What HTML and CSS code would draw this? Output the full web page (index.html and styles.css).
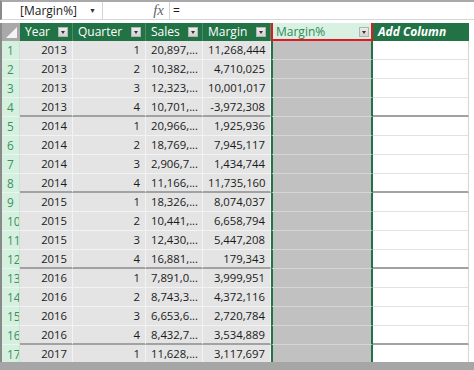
FILE: index.html
```html
<!DOCTYPE html>
<html lang="en">
<head>
  <meta charset="UTF-8">
  <title>Margin%</title>
  <link rel="stylesheet" href="styles.css">
</head>
<body>
  <div class="formula-bar">
    <div class="namebox">[Margin%] <span class="caret">&#9660;</span></div>
    <div class="fx">fx</div>
    <div class="formula">=</div>
  </div>

  <div class="grid">
    <div class="row head">
      <div class="corner">
        <svg width="18" height="18" viewBox="0 0 18 18"><path d="M4 15 L15 4 L15 15 Z" fill="#f4f4f4"/></svg>
      </div>
      <div class="h">Year<span class="filter"></span></div>
      <div class="h">Quarter<span class="filter"></span></div>
      <div class="h">Sales<span class="filter"></span></div>
      <div class="h">Margin<span class="filter"></span></div>
      <div class="h selected">Margin%<span class="filter"></span></div>
      <div class="h add">Add Column</div>
    </div>

    <div class="row"><div class="num">1</div><div class="c r">2013</div><div class="c r">1</div><div class="c">20,897,...</div><div class="c r">11,268,444</div><div class="pct"></div><div class="blank"></div></div>
    <div class="row"><div class="num">2</div><div class="c r">2013</div><div class="c r">2</div><div class="c">10,382,...</div><div class="c r">4,710,025</div><div class="pct"></div><div class="blank"></div></div>
    <div class="row"><div class="num">3</div><div class="c r">2013</div><div class="c r">3</div><div class="c">12,323,...</div><div class="c r">10,001,017</div><div class="pct"></div><div class="blank"></div></div>
    <div class="row group-end"><div class="num">4</div><div class="c r">2013</div><div class="c r">4</div><div class="c">10,701,...</div><div class="c r">-3,972,308</div><div class="pct"></div><div class="blank"></div></div>
    <div class="row"><div class="num">5</div><div class="c r">2014</div><div class="c r">1</div><div class="c">20,966,...</div><div class="c r">1,925,936</div><div class="pct"></div><div class="blank"></div></div>
    <div class="row"><div class="num">6</div><div class="c r">2014</div><div class="c r">2</div><div class="c">18,769,...</div><div class="c r">7,945,117</div><div class="pct"></div><div class="blank"></div></div>
    <div class="row"><div class="num">7</div><div class="c r">2014</div><div class="c r">3</div><div class="c">2,906,7...</div><div class="c r">1,434,744</div><div class="pct"></div><div class="blank"></div></div>
    <div class="row group-end"><div class="num">8</div><div class="c r">2014</div><div class="c r">4</div><div class="c">11,166,...</div><div class="c r">11,735,160</div><div class="pct"></div><div class="blank"></div></div>
    <div class="row"><div class="num">9</div><div class="c r">2015</div><div class="c r">1</div><div class="c">18,326,...</div><div class="c r">8,074,037</div><div class="pct"></div><div class="blank"></div></div>
    <div class="row"><div class="num">10</div><div class="c r">2015</div><div class="c r">2</div><div class="c">10,441,...</div><div class="c r">6,658,794</div><div class="pct"></div><div class="blank"></div></div>
    <div class="row"><div class="num">11</div><div class="c r">2015</div><div class="c r">3</div><div class="c">12,430,...</div><div class="c r">5,447,208</div><div class="pct"></div><div class="blank"></div></div>
    <div class="row group-end"><div class="num">12</div><div class="c r">2015</div><div class="c r">4</div><div class="c">16,881,...</div><div class="c r">179,343</div><div class="pct"></div><div class="blank"></div></div>
    <div class="row"><div class="num">13</div><div class="c r">2016</div><div class="c r">1</div><div class="c">7,891,0...</div><div class="c r">3,999,951</div><div class="pct"></div><div class="blank"></div></div>
    <div class="row"><div class="num">14</div><div class="c r">2016</div><div class="c r">2</div><div class="c">8,743,3...</div><div class="c r">4,372,116</div><div class="pct"></div><div class="blank"></div></div>
    <div class="row"><div class="num">15</div><div class="c r">2016</div><div class="c r">3</div><div class="c">6,653,6...</div><div class="c r">2,720,784</div><div class="pct"></div><div class="blank"></div></div>
    <div class="row group-end"><div class="num">16</div><div class="c r">2016</div><div class="c r">4</div><div class="c">8,432,7...</div><div class="c r">3,534,889</div><div class="pct"></div><div class="blank"></div></div>
    <div class="row"><div class="num">17</div><div class="c r">2017</div><div class="c r">1</div><div class="c">11,628,...</div><div class="c r">3,117,697</div><div class="pct"></div><div class="blank"></div></div>
  </div>

  <div class="hscroll"></div>
</body>
</html>
```

FILE: styles.css
```css
* {
  box-sizing: border-box;
}

body {
  margin: 0;
  width: 474px;
  height: 370px;
  overflow: hidden;
  display: flex;
  flex-direction: column;
  background-color: #fff;
  font-family: "Open Sans", "Noto Sans", sans-serif;
  color: #1a1a1a;
}

/* formula bar */
.formula-bar {
  display: flex;
  flex: none;
  height: 20px;
  border-top: 2px solid #a9a9a9;
  border-bottom: 1px solid #d6d6d6;
  border-left: 2px solid #8a8a8a;
  font-size: 12px;
}

.namebox {
  width: 101px;
  display: flex;
  align-items: center;
  padding-left: 18px;
  border-right: 1px solid #d4d4d4;
}

.caret {
  margin-left: auto;
  margin-right: 6px;
  font-size: 7px;
  color: #333;
}

.fx {
  width: 67px;
  display: flex;
  align-items: center;
  justify-content: flex-end;
  padding-right: 5px;
  border-right: 1px solid #d4d4d4;
  font-family: "Liberation Serif", serif;
  font-style: italic;
  font-size: 15px;
  color: #666;
}

.formula {
  display: flex;
  align-items: center;
  padding-left: 3px;
}

/* grid */
.grid {
  flex: 1;
  margin-top: 3px;
  overflow: hidden;
  border-left: 2px solid #8a8a8a;
  font-size: 11.3px;
}

.row {
  display: grid;
  grid-template-columns: 18px 53px 73px 57px 68px 102px 96px;
  height: 19px;
}

.row > div {
  height: 19px;
  line-height: 18px;
  white-space: nowrap;
  overflow: hidden;
}

.row.head,
.row.head > div {
  height: 18px;
}

.corner {
  background-color: #a9a9a9;
}

.corner svg {
  display: block;
}

.h {
  position: relative;
  display: flex;
  align-items: center;
  padding: 0 4px 0 5px;
  background-color: #217346;
  border-right: 1px solid #4a8e66;
  color: #fff;
  font-size: 12px;
  overflow: visible !important;
}

.h.selected {
  background-color: #d8f1e2;
  color: #2e8a55;
  border-right: none;
}

.h.selected::after {
  content: '';
  position: absolute;
  top: -2px;
  left: 0;
  right: 0;
  bottom: 0;
  border: 2px solid #e0191f;
}

.h.add {
  font-weight: bold;
  font-style: italic;
  border-right: none;
}

.filter {
  margin-left: auto;
  width: 10px;
  height: 10px;
  border: 1px solid #b4b4b4;
  background: linear-gradient(#ececec, #d2d2d2);
  position: relative;
}

.filter::after {
  content: '';
  position: absolute;
  left: 2px;
  top: 3px;
  border-left: 2px solid transparent;
  border-right: 2px solid transparent;
  border-top: 3px solid #333;
}

.num {
  padding-left: 5px;
  background-color: #d6f0e0;
  border-bottom: 1px solid #e8f7ee;
  border-right: 1px solid #c4e5d1;
  color: #3a9160;
  font-size: 11.8px;
}

.c {
  padding: 0 5px;
  background-color: #e4e4e4;
  border-right: 1px solid #f3f3f3;
  border-bottom: 1px solid #f3f3f3;
}

.c.r {
  text-align: right;
}

.pct {
  background-color: #c1c1c1;
  border-left: 2px solid #217346;
  border-right: 2px solid #217346;
  border-bottom: 1px solid #d5d5d5;
}

.blank {
  background-color: #fff;
  border-bottom: 1px solid #e2e2e2;
  border-right: 1px solid #d6d6d6;
}

.group-end .c,
.group-end .blank {
  border-bottom: 2px solid #a2a2a2;
}

.group-end .pct {
  border-bottom: 1px solid #d5d5d5;
}

.hscroll {
  flex: none;
  height: 8px;
  background-color: #a6a6a6;
}
```
